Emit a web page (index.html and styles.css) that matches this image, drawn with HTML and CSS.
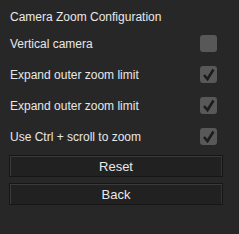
FILE: index.html
```html
<!DOCTYPE html>
<html lang="en">
<head>
    <meta charset="UTF-8">
    <title>Camera Zoom Configuration</title>
    <link rel="stylesheet" href="styles.css">
</head>
<body>

<div class="panel">
    <div class="title">Camera Zoom Configuration</div>

    <!-- pilihan -->
    <label class="row">
        <span>Vertical camera</span>
        <span class="check"></span>
    </label>
    <label class="row">
        <span>Expand outer zoom limit</span>
        <span class="check on"><svg viewBox="0 0 17 17"><path d="M4 9 L7.5 13 L13.5 3.5"/></svg></span>
    </label>
    <label class="row">
        <span>Expand outer zoom limit</span>
        <span class="check on"><svg viewBox="0 0 17 17"><path d="M4 9 L7.5 13 L13.5 3.5"/></svg></span>
    </label>
    <label class="row">
        <span>Use Ctrl + scroll to zoom</span>
        <span class="check on"><svg viewBox="0 0 17 17"><path d="M4 9 L7.5 13 L13.5 3.5"/></svg></span>
    </label>

    <div class="buttons">
        <button class="btn">Reset</button>
        <button class="btn">Back</button>
    </div>
</div>

</body>
</html>
```
FILE: styles.css
```css
body {
    margin: 0;
    background-color: #272727;
    font-family: "Liberation Sans", Arial, sans-serif;
    font-size: 12px;
    color: #e8e8e8;
}
.panel {
    padding: 6px 22px 0 10px;
}
.title {
    height: 22px;
    line-height: 22px;
}
.row {
    display: flex;
    justify-content: space-between;
    align-items: center;
    height: 31px;
}
.check {
    width: 17px;
    height: 17px;
    border-radius: 3px;
    background-color: #585858;
}
.check svg {
    display: block;
    width: 17px;
    height: 17px;
}
.check svg path {
    fill: none;
    stroke: #1c1c1c;
    stroke-width: 2.6;
}
.buttons {
    display: flex;
    flex-direction: column;
    gap: 6px;
    margin: 3px -6px 0 -1px;
}
.btn {
    height: 22px;
    background-color: #212121;
    border: 1px solid #161616;
    box-shadow: inset 1px 1px 0 #3a3a3a, inset -1px 0 0 #333;
    color: #e8e8e8;
    font-family: inherit;
    font-size: 13px;
    padding: 0;
}
```
